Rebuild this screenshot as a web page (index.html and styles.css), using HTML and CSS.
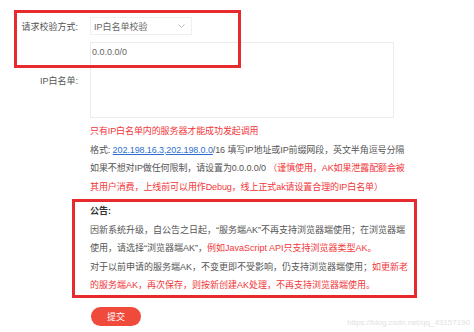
FILE: index.html
```html
<!DOCTYPE html>
<html lang="zh-CN">
<head>
<meta charset="utf-8">
<title>IP白名单校验</title>
<link rel="stylesheet" href="styles.css">
</head>
<body>
<div class="form">
  <div class="row row-select">
    <label class="label">请求校验方式:</label>
    <div class="select">
      <span class="select-value">IP白名单校验</span>
      <svg class="chevron" width="7" height="4" viewBox="0 0 7 4"><path d="M0.5 0.5 L3.5 3.5 L6.5 0.5" fill="none" stroke="#b5b5b5" stroke-width="0.9"/></svg>
    </div>
  </div>
  <div class="row row-area">
    <label class="label">IP白名单:</label>
    <div class="textarea">0.0.0.0/0</div>
  </div>
  <div class="row">
    <span></span>
    <div class="help">
      <p class="red">只有IP白名单内的服务器才能成功发起调用</p>
      <p>格式: <a class="link" href="#">202.198.16.3,202.198.0.0</a>/16 填写IP地址或IP前缀网段，英文半角逗号分隔</p>
      <p>如果不想对IP做任何限制，请设置为0.0.0.0/0 <span class="red">（谨慎使用，AK如果泄露配额会被<br>其用户消费，上线前可以用作Debug，线上正式ak请设置合理的IP白名单）</span></p>
    </div>
  </div>
  <div class="notice">
    <p class="notice-title">公告:</p>
    <p>因新系统升级，自公告之日起，“服务端AK”不再支持浏览器端使用；在浏览器端<br>使用，请选择“浏览器端AK”，<span class="red">例如JavaScript API只支持浏览器类型AK。</span><br>对于以前申请的服务端AK，不变更即不受影响，仍支持浏览器端使用；<span class="red">如更新老<br>的服务端AK，再次保存，则按新创建AK处理，不再支持浏览器端使用。</span></p>
  </div>
  <button class="submit" type="button">提交</button>
</div>
<div class="annot annot-top"></div>
<div class="watermark">https://blog.csdn.net/qq_43157190</div>
</body>
</html>
```
FILE: styles.css
```css
* { box-sizing: border-box; }
html, body { margin: 0; padding: 0; background: #fff; }
body {
  font-family: "Liberation Sans", "Noto Sans CJK SC", sans-serif;
  font-size: 9px;
  color: #555;
  width: 474px;
  height: 332px;
  overflow: hidden;
}
p { margin: 0; }
.form { padding-top: 17px; }
.row {
  display: grid;
  grid-template-columns: 78px 330px;
  column-gap: 12px;
  align-items: center;
}
.label { text-align: right; color: #555; white-space: nowrap; }
.select {
  width: 102px;
  height: 18px;
  border: 1px solid #efefef;
  display: flex;
  align-items: center;
  justify-content: space-between;
  padding: 0 6px 0 3px;
  color: #666;
}
.chevron { display: block; }
.row-area { margin-top: 7px; }
.textarea {
  width: 304px;
  height: 76px;
  border: 1px solid #ececec;
  padding: 3px 1px;
  color: #666;
  line-height: 12px;
}
.help {
  margin-top: 4px;
  line-height: 18.6px;
  white-space: nowrap;
  letter-spacing: -0.1px;
}
.red { color: #f2363a; }
.link { color: #2f6fd0; text-decoration: underline; }
.notice {
  margin: 3px 0 0 72px;
  width: 345px;
  border: 3px solid #e62a2e;
  padding: 0 0 0 15px;
  line-height: 18.5px;
  white-space: nowrap;
}
.notice-title { font-weight: bold; color: #333; }
.submit {
  display: block;
  margin: 9px 0 0 91px;
  width: 50px;
  height: 19px;
  border: none;
  border-radius: 10px;
  background: #f04a3c;
  color: #fff;
  font-family: "Liberation Sans", "Noto Sans CJK SC", sans-serif;
  font-size: 9px;
  padding: 0;
}
.annot {
  position: absolute;
  border: 3px solid #e62a2e;
}
.annot-top { left: 14px; top: 10px; width: 227px; height: 58px; }
.watermark {
  position: absolute;
  right: 4px;
  top: 318px;
  font-size: 8px;
  color: #e2e2e2;
  white-space: nowrap;
}
```
